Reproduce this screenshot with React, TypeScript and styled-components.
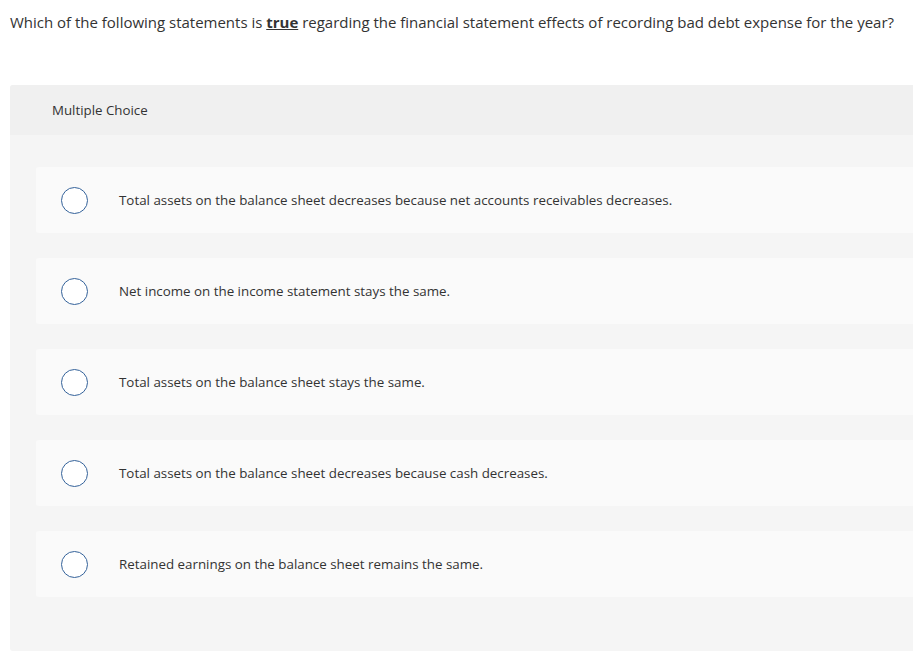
import React from "react";
import styled, { createGlobalStyle } from "styled-components";

const Global = createGlobalStyle`
  html, body { margin: 0; padding: 0; background: #fff; }
  body { font-family: "Open Sans", "Liberation Sans", sans-serif; color: #333; }
`;

const Page = styled.div`
  padding: 12px 0 0 10px;
  width: 913px;
  box-sizing: border-box;
`;

const Question = styled.p`
  margin: 0;
  font-size: 15px;
  letter-spacing: -0.01px;
  line-height: 20px;
  color: #333;
  white-space: nowrap;
  strong { font-weight: 700; text-decoration: underline; }
`;

const Panel = styled.section`
  margin-top: 53px;
  background: #f5f5f5;
  border-radius: 3px 0 0 3px;
  padding-bottom: 54px;
`;

const Header = styled.div`
  height: 50px;
  background: #f0f0f0;
  display: flex;
  align-items: center;
  padding-left: 42px;
  font-size: 13.3px;
  color: #333;
  border-radius: 3px 0 0 0;
`;

const List = styled.div`
  padding: 32px 0 0 26px;
  display: flex;
  flex-direction: column;
  gap: 25px;
`;

const Option = styled.label`
  height: 66px;
  background: #fafafa;
  border-radius: 3px 0 0 3px;
  display: flex;
  align-items: center;
  padding-left: 25px;
  gap: 31px;
  font-size: 13.35px;
  color: #333;
  cursor: pointer;
`;

const Radio = styled.span`
  width: 25px;
  height: 25px;
  border: 1.5px solid #34629a;
  border-radius: 50%;
  background: #fff;
  flex: none;
`;

const options = [
  "Total assets on the balance sheet decreases because net accounts receivables decreases.",
  "Net income on the income statement stays the same.",
  "Total assets on the balance sheet stays the same.",
  "Total assets on the balance sheet decreases because cash decreases.",
  "Retained earnings on the balance sheet remains the same.",
];

export default function App() {
  return (
    <>
      <Global />
      <Page>
        <Question>
          Which of the following statements is <strong>true</strong> regarding the financial statement effects of recording bad debt expense for the year?
        </Question>
        <Panel>
          <Header>Multiple Choice</Header>
          <List>
            {options.map((o) => (
              <Option key={o}>
                <Radio />
                <span>{o}</span>
              </Option>
            ))}
          </List>
        </Panel>
      </Page>
    </>
  );
}
